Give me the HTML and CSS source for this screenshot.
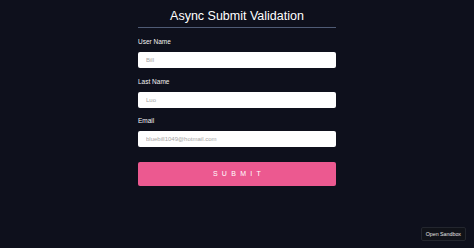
FILE: index.html
```html
<!DOCTYPE html>
<html>
<head>
<meta charset="utf-8">
<link rel="stylesheet" href="styles.css">
</head>
<body>
<form class="form">
  <h1 class="title">Async Submit Validation</h1>
  <label class="label label-first">User Name</label>
  <input class="input" placeholder="Bill">
  <label class="label">Last Name</label>
  <input class="input" placeholder="Luo">
  <label class="label">Email</label>
  <input class="input" placeholder="bluebill1049@hotmail.com">
  <button type="button" class="submit">SUBMIT</button>
</form>
<button type="button" class="sandbox">Open Sandbox</button>
</body>
</html>
```
FILE: styles.css
```css
html, body {
  margin: 0;
  height: 100%;
}
body {
  background: #0e101c;
  font-family: "Liberation Sans", Arial, sans-serif;
  color: #fff;
  position: relative;
}
.form {
  width: 198px;
  margin: 0 auto;
  display: flex;
  flex-direction: column;
}
.title {
  margin: 8px 0 0;
  font-size: 12.5px;
  font-weight: 300;
  text-align: center;
  line-height: 16px;
  padding-bottom: 3px;
  border-bottom: 1px solid #4f5b75;
}
.label {
  font-size: 6.5px;
  line-height: 8px;
  margin: 9.5px 0 6px;
  color: #f2f2f2;
}
.label-first {
  margin-top: 10px;
}
.input {
  box-sizing: border-box;
  height: 16px;
  border: 0;
  border-radius: 2px;
  background: #fff;
  padding: 0 8px;
  font-family: "Liberation Sans", Arial, sans-serif;
  font-size: 6px;
  margin: 0;
}
.input::placeholder {
  color: #a6a6a6;
}
.submit {
  margin-top: 15px;
  height: 23.5px;
  border: 0;
  border-radius: 2px;
  background: #ec5990;
  color: #fff;
  font-family: "Liberation Sans", Arial, sans-serif;
  font-size: 7px;
  letter-spacing: 4.3px;
  padding: 0 0 0 4px;
}
.sandbox {
  position: absolute;
  right: 8px;
  bottom: 7px;
  height: 14px;
  padding: 0 4px;
  background: #101218;
  border: 1px solid #23262e;
  border-radius: 2px;
  color: #e6e6e6;
  font-family: "Liberation Sans", Arial, sans-serif;
  font-size: 5.3px;
}
```
